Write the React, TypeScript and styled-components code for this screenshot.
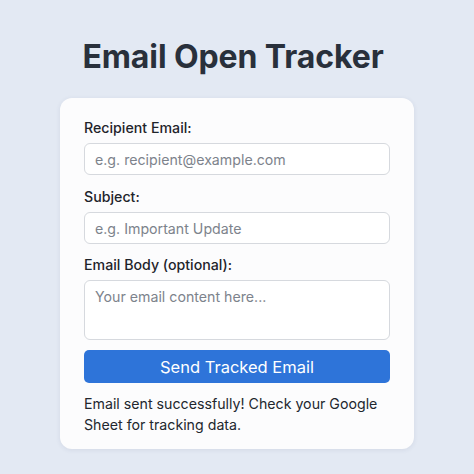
import React from "react";
import styled, { createGlobalStyle } from "styled-components";

const Global = createGlobalStyle`
  html, body { margin: 0; padding: 0; background: #e3e9f3; }
  body { font-family: Inter, "Noto Sans", sans-serif; }
  * { box-sizing: border-box; }
`;

const Page = styled.div`
  width: 474px;
  height: 474px;
  display: flex;
  flex-direction: column;
  align-items: center;
  background: #e3e9f3;
`;

const Title = styled.h1`
  margin: 36px 8px 0 0;
  height: 42px;
  line-height: 42px;
  font-size: 32px;
  font-weight: 700;
  color: #29303b;
  letter-spacing: -0.1px;
`;

const Card = styled.div`
  margin-top: 20px;
  width: 354px;
  background: #fcfcfd;
  border-radius: 12px;
  box-shadow: 0 1px 5px rgba(40, 60, 100, 0.09);
  padding: 20px 24px 14px;
  display: flex;
  flex-direction: column;
`;

const Label = styled.label`
  font-size: 14.2px;
  font-weight: 500;
  color: #1f242b;
  line-height: 20px;
  margin-bottom: 5px;
`;

const Input = styled.input<{ $gap: number }>`
  width: 100%;
  height: 32px;
  border: 1px solid #d6d9de;
  border-radius: 6px;
  padding: 0 10px;
  font-family: Inter, "Noto Sans", sans-serif;
  font-size: 14.2px;
  background: #fff;
  margin-bottom: ${(p) => p.$gap}px;
  &::placeholder { color: #7d838c; }
`;

const TextArea = styled.textarea`
  width: 100%;
  height: 60px;
  border: 1px solid #d6d9de;
  border-radius: 6px;
  padding: 7px 10px;
  font-family: Inter, "Noto Sans", sans-serif;
  font-size: 14.2px;
  background: #fff;
  resize: none;
  margin-bottom: 10px;
  &::placeholder { color: #7d838c; }
`;

const Button = styled.button`
  width: 100%;
  height: 33px;
  border: none;
  border-radius: 5px;
  background: #2e74d9;
  color: #fff;
  font-family: Inter, "Noto Sans", sans-serif;
  font-size: 16.5px;
  font-weight: 400;
`;

const Message = styled.p`
  margin: 10px 0 0;
  font-size: 14.2px;
  line-height: 21px;
  color: #22272e;
`;

export default function App() {
  return (
    <Page>
      <Global />
      <Title>Email Open Tracker</Title>
      <Card>
        <Label>Recipient Email:</Label>
        <Input $gap={12} placeholder="e.g. recipient@example.com" />
        <Label>Subject:</Label>
        <Input $gap={11} placeholder="e.g. Important Update" />
        <Label>Email Body (optional):</Label>
        <TextArea placeholder="Your email content here..." />
        <Button>Send Tracked Email</Button>
        <Message>
          Email sent successfully! Check your Google Sheet for tracking data.
        </Message>
      </Card>
    </Page>
  );
}
